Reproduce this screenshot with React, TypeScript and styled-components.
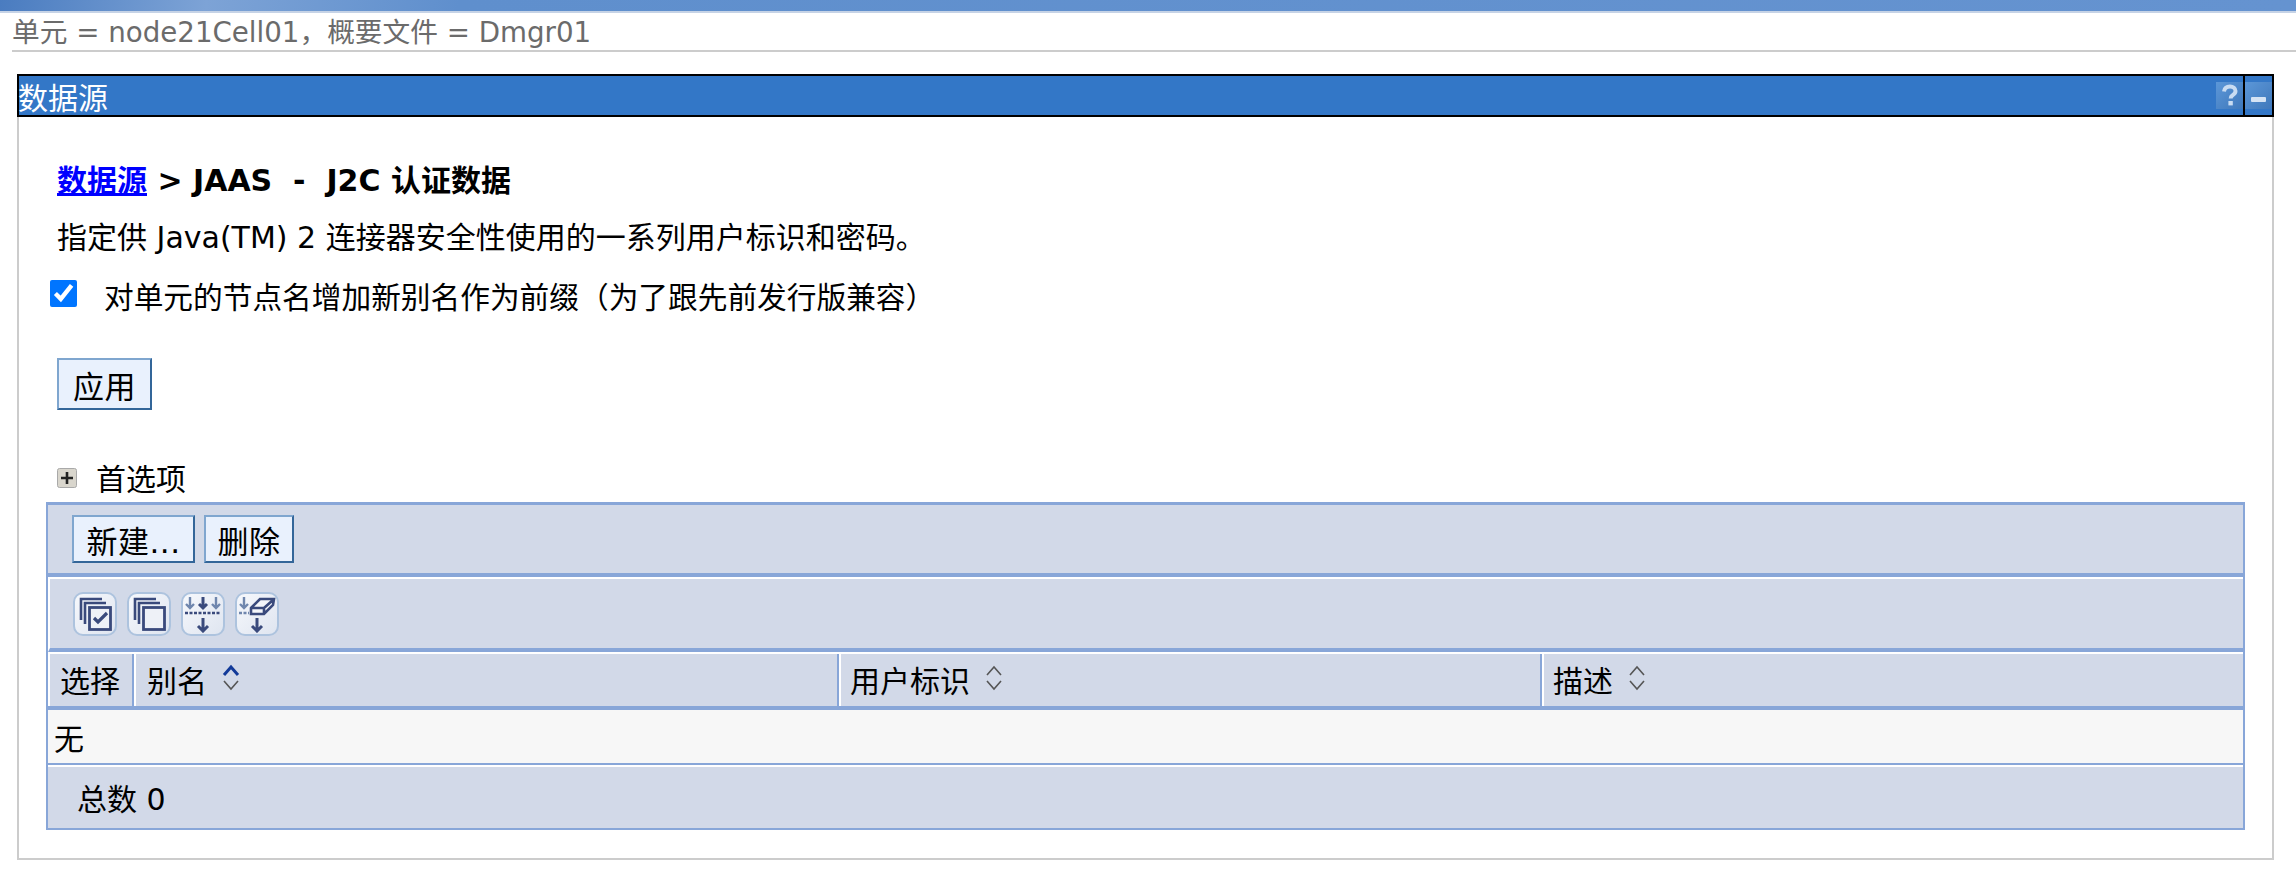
import styled, { createGlobalStyle } from 'styled-components';

const GlobalStyle = createGlobalStyle`
  html, body {
    margin: 0;
    padding: 0;
    background: #fff;
    font-family: "DejaVu Sans", "Noto Sans CJK SC", sans-serif;
    font-size: 30px;
    color: #000;
  }
  * { box-sizing: border-box; }
`;

const TopBar = styled.div`
  height: 13px;
  background: linear-gradient(100deg, #4a7cc0 0%, #7da3d6 9%, #5f8fcd 20%, #6593d0 100%);
  border-bottom: 2px solid #c6d3e6;
`;

const ContextBar = styled.div`
  height: 39px;
  margin-left: 12px;
  padding-bottom: 4px;
  display: flex;
  align-items: center;
  font-size: 27.7px;
  color: #6b6b6b;
  border-bottom: 2px solid #ccc;
`;

const Panel = styled.section`
  margin: 22px 22px 0 17px;
`;

const PanelHeader = styled.header`
  height: 43px;
  display: flex;
  align-items: center;
  background: #3377c7;
  border: 2px solid #000;
  color: #fff;
`;

const PanelTitle = styled.h2`
  flex: 1;
  margin: 0 0 0 -1px;
  font-size: 30px;
  font-weight: normal;
`;

const HeaderIcon = styled.div<{ $divided?: boolean }>`
  width: ${({ $divided }) => ($divided ? '29px' : '27px')};
  height: 39px;
  display: flex;
  align-items: center;
  justify-content: center;
  border-left: ${({ $divided }) => ($divided ? '2px solid #000' : 'none')};
`;

const PanelBody = styled.div`
  border: 2px solid #ccc;
  border-top: none;
  padding: 41px 27px 28px 27px;
  height: 743px;
`;

const Crumb = styled.div`
  height: 40px;
  margin-left: 11px;
  display: flex;
  align-items: center;
  font-weight: bold;
  white-space: pre;

  a {
    color: #0000ff;
    text-decoration: underline;
  }
`;

const Description = styled.p`
  margin: 17px 0 0 11px;
  height: 40px;
  display: flex;
  align-items: center;
`;

const CheckRow = styled.label`
  margin: 19px 0 0 4px;
  height: 40px;
  display: flex;
  align-items: center;
  gap: 27px;
  font-size: 29.7px;

  input {
    width: 27px;
    height: 27px;
    margin: 0 0 2px;
    accent-color: #0075ff;
  }

  span {
    padding-top: 2px;
  }
`;

const ApplyWrap = styled.div`
  margin: 44px 0 0 11px;
`;

const Button = styled.button<{ $width: number; $height: number }>`
  width: ${({ $width }) => $width}px;
  height: ${({ $height }) => $height}px;
  padding: 0;
  font-family: inherit;
  font-size: 31px;
  letter-spacing: 0.5px;
  color: #000;
  background: #e9f1fd;
  border: 2px solid;
  border-color: #7fa6cf #336699 #336699 #7fa6cf;
`;

const PrefRow = styled.div`
  margin: 50px 0 0 11px;
  height: 36px;
  padding-bottom: 2px;
  display: flex;
  align-items: center;
  gap: 19px;

  svg {
    margin-top: 2px;
  }
`;

const Table = styled.div`
  margin: 6px 0 0 0;
  border: solid #88a6d8;
  border-width: 3px 2px 0 2px;
`;

const Section = styled.div<{ $height: number; $line: number; $white?: boolean }>`
  height: ${({ $height }) => $height}px;
  background: #d2d9e8;
  border-bottom: ${({ $line }) => $line}px solid #88a6d8;
  border-top: ${({ $white }) => ($white ? '2px solid #fff' : 'none')};
  border-left: ${({ $white }) => ($white ? '2px solid #fff' : 'none')};
  display: flex;
  align-items: center;
`;

const ButtonBar = styled(Section)`
  padding-left: 24px;
  gap: 9px;
`;

const IconBar = styled(Section)`
  padding-left: 23px;
  gap: 10px;
`;

const IconButton = styled.div`
  width: 44px;
  height: 44px;
  border: 2px solid #adc3de;
  border-radius: 10px;
  background: linear-gradient(135deg, #f6f8fc 0%, #dfe5f0 100%);
  display: flex;
  align-items: center;
  justify-content: center;
`;

const HeadRow = styled(Section)`
  align-items: stretch;
  border-top: 2px solid #fff;
  border-left: none;
  background: #fff;
`;

const HeadCell = styled.div<{ $width?: number; $first?: boolean; $pad: number }>`
  ${({ $width }) => ($width ? `width: ${$width}px;` : 'flex: 1;')}
  background: #d2d9e8;
  display: flex;
  align-items: center;
  gap: 15px;
  padding: 0 0 2px ${({ $pad }) => $pad}px;
  border-left: 2px solid #fff;
  margin-left: ${({ $first }) => ($first ? '0' : '2px')};
  box-shadow: -2px 0 0 #88a6d8;

  svg {
    margin-bottom: 3px;
  }
`;

const EmptyRow = styled.div`
  height: 55px;
  background: #f7f7f7;
  border-bottom: 2px solid #88a6d8;
  display: flex;
  align-items: center;
  padding-left: 6px;
`;

const FooterRow = styled.div`
  height: 65px;
  background: #d2d9e8;
  border-top: 2px solid #fff;
  border-bottom: 2px solid #88a6d8;
  display: flex;
  align-items: center;
  padding: 0 0 2px 29px;
`;

const HelpIcon = () => (
  <svg width="27" height="27" viewBox="0 0 27 27">
    <defs>
      <linearGradient id="helpBg" x1="0" y1="0" x2="1" y2="1">
        <stop offset="0" stopColor="#5c97d8" />
        <stop offset="1" stopColor="#3f78bb" />
      </linearGradient>
    </defs>
    <rect width="27" height="27" fill="url(#helpBg)" />
    <path d="M8 9.5C8.5 6 11 4.5 14 4.5c3.2 0 5.5 1.8 5.5 4.6 0 2.4-1.7 3.4-3.2 4.4-1.2.8-1.6 1.4-1.6 3" fill="none" stroke="#c9dcf2" strokeWidth="4" />
    <rect x="12.4" y="19" width="4.4" height="4.4" fill="#c9dcf2" />
  </svg>
);

const MinimizeIcon = () => (
  <svg width="27" height="27" viewBox="0 0 27 27">
    <defs>
      <linearGradient id="minBg" x1="0" y1="0" x2="1" y2="1">
        <stop offset="0" stopColor="#5c97d8" />
        <stop offset="1" stopColor="#3f78bb" />
      </linearGradient>
    </defs>
    <rect width="27" height="27" fill="url(#minBg)" />
    <rect x="6" y="15" width="15" height="5" rx="1" fill="#d5e3f4" />
  </svg>
);

const PlusIcon = () => (
  <svg width="20" height="20" viewBox="0 0 20 20">
    <rect x="0.5" y="0.5" width="19" height="19" rx="2" fill="#d9d6cd" stroke="#a9a9a9" />
    <path d="M4 10h12M10 4v12" stroke="#222" strokeWidth="2.6" />
  </svg>
);

const Stack = ({ children }: { children?: React.ReactNode }) => (
  <svg width="36" height="36" viewBox="0 0 36 36" fill="none" stroke="#3a4a7c" strokeWidth="2.6">
    <path d="M4 24V3h21M8 28V7h21" />
    <rect x="12.5" y="11.5" width="21" height="22" fill="#eef1f7" strokeWidth="2.8" />
    {children}
  </svg>
);

const DownRows = () => (
  <svg width="38" height="38" viewBox="0 0 38 38" fill="none" stroke="#3a4a7c" strokeWidth="2.4">
    <path d="M6 2v11M2 9l4 4 4-4M32 2v11M28 9l4 4 4-4" stroke="#6f86ad" />
    <path d="M19 2v11M15 9l4 4 4-4" strokeWidth="3" />
    <path d="M1 18h36" strokeDasharray="3 1.5" />
    <path d="M19 23v13M14 31l5 5 5-5" strokeWidth="3" />
  </svg>
);

const EraseRows = () => (
  <svg width="38" height="38" viewBox="0 0 38 38" fill="none" stroke="#3a4a7c" strokeWidth="2.4">
    <path d="M6 2v11M2 9l4 4 4-4" stroke="#6f86ad" />
    <path d="M1 18h10" strokeDasharray="3 1.5" stroke="#6f86ad" />
    <path d="M13 13l9-9h14l-1 6-9 9H13zM13 13h13v6M26 13l9-8" strokeWidth="2.6" fill="#f4f6fa" />
    <path d="M19 23v13M14 31l5 5 5-5" strokeWidth="3" />
  </svg>
);

const SortIcon = ({ active }: { active?: boolean }) => (
  <svg width="18" height="30" viewBox="0 0 18 30" fill="none">
    <path d="M2 12l7-8 7 8" stroke={active ? '#123a99' : '#555'} strokeWidth={active ? 3 : 1.6} />
    <path d="M2 18l7 8 7-8" stroke="#555" strokeWidth="1.6" />
  </svg>
);

const App = () => {
  return (
    <>
      <GlobalStyle />
      <TopBar />
      <ContextBar>单元 = node21Cell01，概要文件 = Dmgr01</ContextBar>
      <Panel>
        <PanelHeader>
          <PanelTitle>数据源</PanelTitle>
          <HeaderIcon><HelpIcon /></HeaderIcon>
          <HeaderIcon $divided><MinimizeIcon /></HeaderIcon>
        </PanelHeader>
        <PanelBody>
          <Crumb><a href="#">数据源</a>{' > JAAS  -  J2C 认证数据'}</Crumb>
          <Description>指定供 Java(TM) 2 连接器安全性使用的一系列用户标识和密码。</Description>
          <CheckRow>
            <input type="checkbox" defaultChecked />
            <span>对单元的节点名增加新别名作为前缀（为了跟先前发行版兼容）</span>
          </CheckRow>
          <ApplyWrap><Button $width={95} $height={52}>应用</Button></ApplyWrap>
          <PrefRow><PlusIcon />首选项</PrefRow>
          <Table>
            <ButtonBar $height={72} $line={4}>
              <Button $width={123} $height={48}>新建...</Button>
              <Button $width={90} $height={48}>删除</Button>
            </ButtonBar>
            <IconBar $height={75} $line={4} $white>
              <IconButton>
                <Stack><path d="M17 22l4 4 9-9" strokeWidth="3.2" /></Stack>
              </IconButton>
              <IconButton><Stack /></IconButton>
              <IconButton><DownRows /></IconButton>
              <IconButton><EraseRows /></IconButton>
            </IconBar>
            <HeadRow $height={58} $line={4}>
              <HeadCell $width={84} $first $pad={10}>选择</HeadCell>
              <HeadCell $width={703} $pad={11}>别名<SortIcon active /></HeadCell>
              <HeadCell $width={701} $pad={9}>用户标识<SortIcon /></HeadCell>
              <HeadCell $pad={9}>描述<SortIcon /></HeadCell>
            </HeadRow>
            <EmptyRow>无</EmptyRow>
            <FooterRow>总数 0</FooterRow>
          </Table>
        </PanelBody>
      </Panel>
    </>
  );
};

export default App;
